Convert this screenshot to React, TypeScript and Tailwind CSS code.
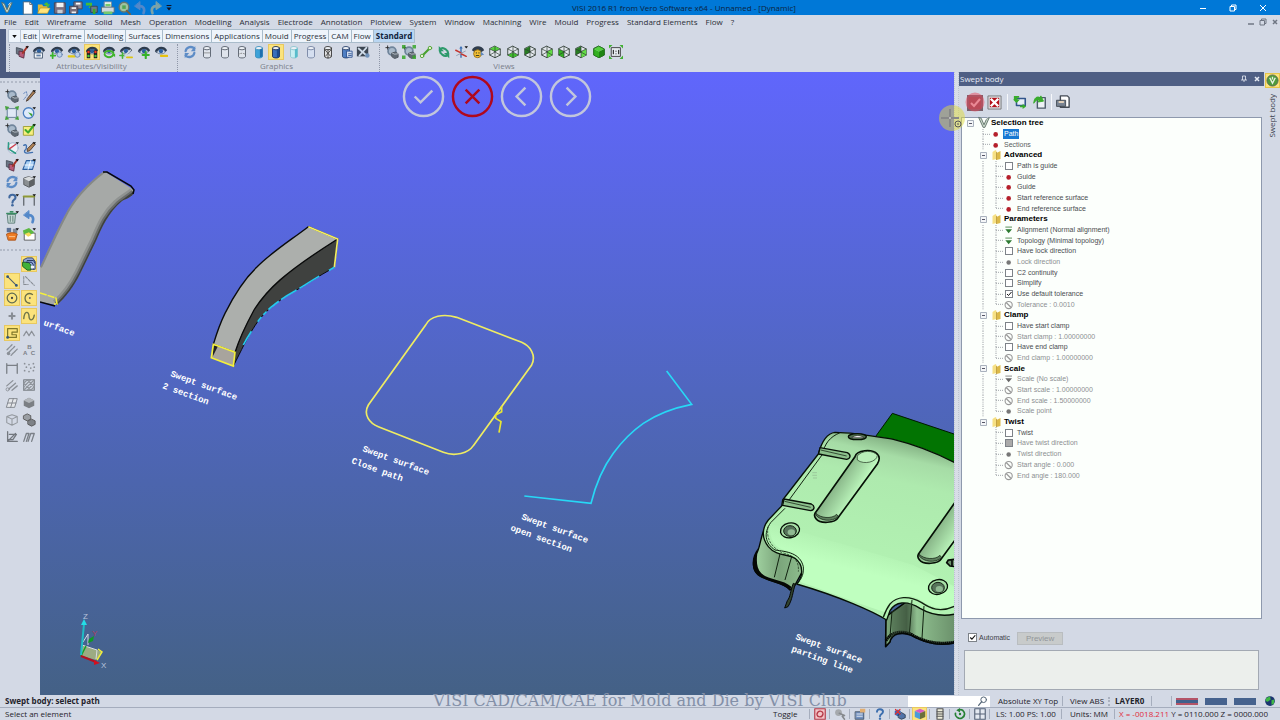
import { useState } from 'react';
import type { ReactNode } from 'react';
import clsx from 'clsx';

const MENU = [
  'File', 'Edit', 'Wireframe', 'Solid', 'Mesh', 'Operation', 'Modelling', 'Analysis', 'Electrode', 'Annotation',
  'Plotview', 'System', 'Window', 'Machining', 'Wire', 'Mould', 'Progress', 'Standard Elements', 'Flow', '?',
];

const TABS = [
  'Edit', 'Wireframe', 'Modelling', 'Surfaces', 'Dimensions', 'Applications', 'Mould', 'Progress', 'CAM', 'Flow', 'Standard',
];

/* ---------- icons ---------- */

function Svg({ children, className = 'size-[14px]' }: { children: ReactNode; className?: string }) {
  return (
    <svg viewBox="0 0 16 16" className={clsx('shrink-0', className)} fill="none" strokeLinecap="round" strokeLinejoin="round" aria-hidden="true">
      {children}
    </svg>
  );
}

function Eye({ children }: { children?: ReactNode }) {
  return (
    <Svg>
      <path d="M1 7C3 1 12 0 15 6L13 8C10 4 6 4 3 9Z" fill="#2d3b4d" />
      <path d="M3 8C6 4 11 4 13 8C10 11 6 11 3 8Z" fill="#dfe8f2" stroke="#5f7088" />
      <circle cx="8" cy="7" r="2.4" fill="#2c5f9e" />
      {children}
    </Svg>
  );
}

function Cylinder({ fill = '#dfe4ec', stroke = '#555d69', children }: { fill?: string; stroke?: string; children?: ReactNode }) {
  return (
    <Svg>
      <path d="M4 4V13C4 15.4 12 15.4 12 13V4" fill={fill} stroke={stroke} />
      <ellipse cx="8" cy="3.6" rx="4" ry="1.9" fill="#edf1f6" stroke={stroke} />
      {children}
    </Svg>
  );
}

function Cube({ top, left, right, bottom, back }: { top?: boolean; left?: boolean; right?: boolean; bottom?: boolean; back?: boolean }) {
  const solid = top && left && right;
  return (
    <Svg>
      <path d="M8 1.5L14 4.5V11.5L8 14.5L2 11.5V4.5Z" fill="#e4e9ee" stroke="#2f3c35" />
      {bottom && <path d="M8 8.5L14 11.5L8 14.5L2 11.5Z" fill="#3fbe2b" />}
      {back && <path d="M8 1.5L2 4.5V11.5L8 8.5Z" fill="#277d22" />}
      {top && <path d="M8 1.5L14 4.5L8 7.5L2 4.5Z" fill="#52d03b" />}
      {left && <path d="M2 4.5L8 7.5V14.5L2 11.5Z" fill="#33b021" />}
      {right && <path d="M14 4.5L8 7.5V14.5L14 11.5Z" fill={solid ? '#1f8514' : '#62dc45'} />}
      {solid ? (
        <path d="M8 1.5L14 4.5V11.5L8 14.5L2 11.5V4.5Z" stroke="#1f7a18" />
      ) : (
        <path d="M2 4.5L8 7.5L14 4.5M8 7.5V14.5M8 1.5V8L2 11.5M8 8L14 11.5" stroke="#2f3c35" strokeWidth=".8" />
      )}
    </Svg>
  );
}

const corner = <path d="M12 1.5H16L14 4Z" fill="#111" />;

function Magnifier({ green }: { green?: boolean }) {
  return (
    <Svg>
      <path d="M1 3H5M3 1V5" stroke="#222" />
      <circle cx="8" cy="7" r="4.500" fill="#a9bacb" stroke="#70859b" strokeWidth="2" />
      <path d="M8 9L12 8L15 10V14L11 15.500L8 13.500Z" fill="#5f6973" stroke="#4a525b" />
      <path d="M8 9L11 10.500L15 10" stroke="#b9c1c9" />
      {green && <path d="M0 0H4V4H0ZM12 0H16V4H12ZM0 12H4V16H0ZM12 12H16V16H12Z" fill="#37a62b" fillOpacity=".85" />}
    </Svg>
  );
}

const icons: Record<string, ReactNode> = {
  v: (
    <Svg>
      <path d="M2 2L7 13L9 13L14 2L11 3L8 10L5 3Z" fill="#c9d7c9" stroke="#5d6f67" />
      <path d="M10 4L12 2" stroke="#fff" />
    </Svg>
  ),
  newDoc: <Svg><path d="M3 1H10L13 4V15H3Z" fill="#fff" stroke="#5d6b7a" /><path d="M10 1V4H13" stroke="#5d6b7a" /></Svg>,
  open: <Svg><path d="M1 4H6L7 6H12V14H1Z" fill="#e0b83a" /><path d="M4 8H15L12 14H1Z" fill="#ffe37a" stroke="#b58d1e" strokeWidth=".700" /><path d="M8 4C10 1 12 1 13 4L15 3L13 7L10 5" fill="#4bb93a" /></Svg>,
  save: <Svg><path d="M2 2H14V14H2Z" fill="#7b6f80" stroke="#4a434f" /><path d="M4 2H12V7H4Z" fill="#f1f1f1" /><path d="M5 10H11V14H5Z" fill="#c7cdd4" /></Svg>,
  saveAll: <Svg><path d="M6 1H15V9H6Z" fill="#8d8792" stroke="#474150" /><path d="M8 2H13V4H8Z" fill="#fff" /><path d="M1 6H10V14H1Z" fill="#756d7c" stroke="#474150" /><path d="M3 7H8V9H3ZM3 12H8V14H3Z" fill="#eee" /></Svg>,
  swap: <Svg><path d="M1 2H8V8H4L6 5H1Z" fill="#45bb37" /><path d="M7 6H14V13H7Z" fill="#6e7a88" stroke="#39424d" /><path d="M9 9H12V15H9Z" fill="#39a62c" /></Svg>,
  print: <Svg><path d="M4 1H12V7H4Z" fill="#fff" stroke="#789" /><path d="M1 7H15V13H1Z" fill="#cfd8dd" stroke="#5c6b75" /><path d="M5 3H11V6H5ZM3 12H13V15H3Z" fill="#74c96d" /></Svg>,
  preview: <Svg><circle cx="8" cy="7" r="5.500" fill="#9fc2a1" stroke="#68786d" strokeWidth="1.600" /><path d="M6 5H10V9H6Z" fill="#4fa653" /><path d="M11 11L15 15" stroke="#79603c" strokeWidth="2" /></Svg>,
  undo: <Svg><path d="M12 14C14 9 12 5 6 6" stroke="#5388c9" strokeWidth="3" /><path d="M8 1V10L2 6Z" fill="#5388c9" stroke="#5388c9" /></Svg>,
  redo: <Svg><path d="M4 14C2 9 4 5 10 6" stroke="#7ca3a8" strokeWidth="3" /><path d="M8 1V10L14 6Z" fill="#7ca3a8" stroke="#7ca3a8" /></Svg>,
  drop: <Svg className="size-[8px]"><path d="M4 3H12" stroke="#112" strokeWidth="2" /><path d="M3 7H13L8 13Z" fill="#112" /></Svg>,

  paint: <Svg><path d="M2 3L9 5L8 12L2 10Z" fill="#6a7584" stroke="#3d4550" /><path d="M5 7L11 8L10 15L5 13Z" fill="#b85a78" stroke="#5c3045" /><path d="M14 2L9 9" stroke="#a5352a" strokeWidth="2.200" />{corner}</Svg>,
  eyeDoc: <Eye><path d="M3 9H12V15H3Z" fill="#f0f4f8" stroke="#445870" /><path d="M5 11H10V13H5Z" fill="#5f7fa8" /></Eye>,
  eyeGlass: <Eye><path d="M3 9V15M0 12H6" stroke="#3ab52d" strokeWidth="2" /><circle cx="11" cy="11" r="3" fill="#bcd0ea" stroke="#6a87b0" /></Eye>,
  eyeMinusGlass: <Eye><path d="M2 13H9" stroke="#e2c913" strokeWidth="2.400" /><circle cx="12" cy="11" r="3" fill="#bcd0ea" stroke="#6a87b0" /></Eye>,
  eyeLights: <Eye><path d="M2 6H6V15H2ZM10 6H14V15H10Z" fill="#222" /><circle cx="4" cy="8" r="1.400" fill="#e32" /><circle cx="12" cy="8" r="1.400" fill="#e32" /><circle cx="4" cy="12.500" r="1.400" fill="#4c3" /><circle cx="12" cy="12.500" r="1.400" fill="#4c3" /></Eye>,
  eyeCycle: <Eye><path d="M3 11C5 15 11 15 13 11M13 9C11 6 5 6 3 9" stroke="#3eb52b" strokeWidth="2.200" /><path d="M11 10H15V14Z" fill="#3eb52b" /></Eye>,
  eyePick: <Eye><path d="M4 9V15M1 12H7" stroke="#48b43a" strokeWidth="1.800" /><path d="M9 14H15" stroke="#dcc414" strokeWidth="2" /><path d="M13 6L7 12" stroke="#ced8e2" strokeWidth="2" /></Eye>,
  eyePlus: <Eye><path d="M10 8V15M6.500 11.500H13.500" stroke="#37b329" strokeWidth="2.400" /></Eye>,
  eyeMinus: <Eye><path d="M8 12.500H15" stroke="#e7c20f" strokeWidth="2.600" /></Eye>,

  refresh: <Svg><path d="M3 7C4 2 10 1 13 4M13 9C12 14 6 15 3 12" stroke="#5d8cc6" strokeWidth="2.600" /><path d="M14 1V7H9ZM2 15V9H7Z" fill="#5d8cc6" /></Svg>,
  cylWire: <Cylinder><path d="M5 9H11" stroke="#777" strokeWidth=".800" /></Cylinder>,
  cylPlain: <Cylinder />,
  cylHidden: <Cylinder><path d="M4 11C6 9 10 9 12 11" stroke="#777" strokeDasharray="1 2" /></Cylinder>,
  cylBlue: <Cylinder fill="#3da2d8" stroke="#3c8fbd"><path d="M9 5V14L12 13V4Z" fill="#1f6fae" /></Cylinder>,
  cylShaded: <Cylinder fill="#3a6fbb" stroke="#1d2c49"><path d="M9 5V15L12 13V4Z" fill="#1d4a90" /></Cylinder>,
  cylGhost: <Cylinder fill="#c8eef2" stroke="#8cc4cf"><path d="M9 5V15L12 13V4Z" fill="#58bccb" /></Cylinder>,
  cylLight: <Cylinder fill="#d5dff0" stroke="#7381a0" />,
  cylMesh: <Cylinder fill="#e1e1e1" stroke="#333"><path d="M5 6L11 13M11 6L5 13M8 5V15" stroke="#333" strokeWidth=".900" /></Cylinder>,
  cylBook: <Cylinder fill="#4e7fc4" stroke="#29416b"><path d="M9 7H15V14H9Z" fill="#d3def0" stroke="#2f5392" /><path d="M11 10H14M11 12H14" stroke="#2f5392" /></Cylinder>,
  tools: <Svg><path d="M1 2H14V13H1Z" fill="#3c4652" /><path d="M3 4L12 12M12 3L4 12" stroke="#cfdbe8" strokeWidth="2" /><circle cx="13" cy="12" r="2.500" fill="#6f92ba" /></Svg>,

  zoomBox: <Magnifier />,
  zoomAll: <Magnifier green />,
  measure: <Svg><path d="M4 12L12 4" stroke="#48a02f" strokeWidth="2.400" /><circle cx="3.500" cy="12.500" r="2" fill="#eaf2cf" stroke="#48a02f" /><circle cx="12.500" cy="3.500" r="2" fill="#eaf2cf" stroke="#48a02f" /></Svg>,
  rotate: <Svg><path d="M4 9C2 4 6 2 10 5L12 7M12 7C14 12 10 14 6 11L4 9" stroke="#2d9a6b" strokeWidth="2.400" /><path d="M2 1V7H8ZM14 15V9H8Z" fill="#2d9a6b" /></Svg>,
  axes: <Svg><path d="M8 14V3" stroke="#3b6fb5" strokeWidth="1.600" /><path d="M8 9L2 6M8 10L14 13" stroke="#c4342d" strokeWidth="1.600" /><path d="M3 12L13 7" stroke="#8b9bb0" /><path d="M6 4L8 1L10 4Z" fill="#3b6fb5" />{corner}</Svg>,
  eyeMan: <Svg><path d="M1 6C3 0 13 0 15 6L12 8H4Z" fill="#2f3c4c" /><circle cx="7.500" cy="10" r="4.500" fill="#f3bf34" stroke="#926c17" /><path d="M6 9H6.200M9 9H9.200M6 12H9" stroke="#442" strokeWidth="1.200" /><path d="M11 7L15 11L11 12Z" fill="#5c87c0" /></Svg>,
  cubeTop: <Cube top />,
  cubeBottom: <Cube bottom />,
  cubeBack: <Cube back />,
  cubeRight: <Cube right />,
  cubeLeft: <Cube left />,
  cubeRear: <Cube back right />,
  cubeIso: <Cube top left right />,
  oneToOne: <Svg><path d="M3 3H13V13H3Z" fill="#e8ecf1" stroke="#333" /><path d="M5 6V10M11 6V10M8 7V7.100M8 10V10.100" stroke="#333" strokeWidth="1.400" /><path d="M0 0H4L0 4ZM16 0V4L12 0ZM0 16V12L4 16ZM16 16H12L16 12Z" fill="#41b033" /></Svg>,

  // left dock
  sketchPen: <Svg><path d="M2 5L5 3L6 7L2 12" stroke="#5a7fb8" strokeDasharray="2 1.500" /><path d="M13 2L6 11L5 14L8 12L15 4Z" fill="#a97d52" stroke="#4b3c32" />{corner}</Svg>,
  fitBox: <Svg><path d="M3 3H13V13H3Z" fill="#dfe9f5" stroke="#5c7691" /><path d="M0 0L5 1L1 5ZM16 0L11 1L15 5ZM0 16L1 11L5 15ZM16 16L11 15L15 11Z" fill="#45a33a" /></Svg>,
  circlePen: <Svg><circle cx="7.500" cy="8" r="6" fill="#dfeafa" stroke="#4a7fc0" strokeWidth="1.500" /><path d="M7 7L11 12L12 9Z" fill="#37a12e" />{corner}</Svg>,
  tick: <Svg><path d="M2 4H13V14H2Z" fill="#f7ee7f" stroke="#9b9b2a" /><path d="M4 8L7 11L14 2" stroke="#3bab2e" strokeWidth="2.400" />{corner}</Svg>,
  axesBall: <Svg><circle cx="9" cy="8" r="6" fill="#eef2f8" stroke="#9fb0c9" /><path d="M4 2V9L12 14" stroke="#2d9b85" strokeWidth="1.800" /><path d="M5 9L12 4" stroke="#cc4050" strokeWidth="1.600" />{corner}</Svg>,
  curvePen: <Svg><path d="M2 5C6 2 6 9 3 11C2 15 8 14 12 13" stroke="#3f6fae" strokeWidth="1.600" /><path d="M13 2L6 9L6 12L9 11L15 4Z" fill="#b18353" stroke="#4b3c32" />{corner}</Svg>,
  surface: <Svg><path d="M5 3H15L12 13H1Z" fill="#a9d0f5" stroke="#2b5f9e" strokeWidth="1.300" /><path d="M10 3L7 13M3 8H13" stroke="#fff" />{corner}</Svg>,
  solid: <Svg><path d="M8 2L14 4V11L8 14L2 11V4Z" fill="#8b8f92" stroke="#53575a" /><path d="M2 4L8 7L14 4L8 2Z" fill="#d9dcde" /><path d="M8 7L14 4V11L8 14Z" fill="#5e6265" />{corner}</Svg>,
  help: <Svg><path d="M5 5C5 1 12 1 12 5C12 8 8.500 7 8.500 11" stroke="#41699f" strokeWidth="2.400" /><circle cx="8.500" cy="14" r="1.500" fill="#41699f" />{corner}</Svg>,
  dimension: <Svg><path d="M2 4V14M14 4V14" stroke="#5c6168" strokeWidth="1.400" /><path d="M2 4H14" stroke="#8f9a35" strokeWidth="2.400" />{corner}</Svg>,
  bin: <Svg><path d="M3 5H12L11 15H4Z" fill="#c6d8d5" stroke="#52766f" /><path d="M2 4H13M6 2H9" stroke="#3b8e63" strokeWidth="1.600" /><path d="M6 7V13M9 7V13" stroke="#52766f" />{corner}</Svg>,
  hand: <Svg><path d="M2 1H7V6H2Z" fill="#5b7196" /><path d="M9 2H14V7H9Z" fill="#7d8897" /><path d="M2 8C5 6 11 6 14 8L12 15H4Z" fill="#ee7c24" stroke="#a84b10" /><path d="M5 11H11" stroke="#ffd0a0" />{corner}</Svg>,
  picture: <Svg><path d="M3 7H15V15H3Z" fill="#fff" stroke="#555" /><path d="M1 4L8 1L14 6L9 9L2 8Z" fill="#5cb842" /><path d="M3 8L8 6L11 9L7 11Z" fill="#f3da58" />{corner}</Svg>,
  layers: (
    <Svg>
      <path d="M2 3L6 1H12L15 5V14H10L2 8Z" fill="#8fa6d8" stroke="#27376d" />
      <path d="M1 6H7L10 9V15H6L1 11Z" fill="#41b038" stroke="#1d5b1c" />
      <path d="M6 4L13 4L15 7M5 6H11L13 9V14" stroke="#1e2c55" />
      <path d="M10 10H14V13H10Z" fill="#eef1f5" />
    </Svg>
  ),
  line: <Svg><path d="M3 3L13 13" stroke="#52606d" strokeWidth="1.300" /><circle cx="3" cy="3" r="1.600" fill="#34577d" /><circle cx="13" cy="13" r="1.600" fill="#34577d" /></Svg>,
  angleLine: <Svg><path d="M2 3V12H7M4 3L14 13" stroke="#868c94" strokeWidth="1.200" strokeDasharray="3 1.500" /></Svg>,
  circle: <Svg><circle cx="8" cy="8" r="5.500" stroke="#5f6a50" strokeWidth="1.400" /><circle cx="8" cy="8" r="1.300" fill="#444" /></Svg>,
  arc: <Svg><path d="M12 4C7 1 2 5 4 11C5 13 8 14 9 14" stroke="#6d6f46" strokeWidth="1.500" /><circle cx="9" cy="8" r="1.100" fill="#666" /></Svg>,
  point: <Svg><path d="M8 5V11M5 8H11" stroke="#888d94" strokeWidth="2.400" /></Svg>,
  spline: <Svg><path d="M2 11C3 1 8 3 8 8C8 14 13 14 14 7" stroke="#71764a" strokeWidth="1.600" /></Svg>,
  profile: <Svg><path d="M3 13V3H14V7H8V10H13V13H4" stroke="#80782a" strokeWidth="1.400" /><circle cx="3" cy="13" r="1.600" fill="#34577d" /></Svg>,
  zigzag: <Svg><path d="M2 11L5 6L8 11L11 6L14 11" stroke="#8b9097" strokeWidth="1.400" /></Svg>,
  hatchA: <Svg><path d="M2 7L9 14M5 4L12 11M8 2L14 8" stroke="#8b9097" strokeWidth="1.500" strokeDasharray="2 1" transform="matrix(-1 0 0 1 16 0)" /><circle cx="4" cy="12" r="2" fill="#8b9097" /></Svg>,
  dimGrey: <Svg><path d="M2 3V14M14 3V14M2 5H14" stroke="#7b8087" strokeWidth="1.500" /></Svg>,
  dots: <Svg><path d="M3 3V3.100M8 4V4.100M13 3V3.100M5 7V7.100M10 8V8.100M3 11V11.100M8 12V12.100M13 11V11.100M14 7V7.100" stroke="#8b9097" strokeWidth="2" /></Svg>,
  hatchB: <Svg><path d="M2 9L8 14M4 6L11 12M7 3L14 9" stroke="#8b9097" strokeWidth="1.500" transform="matrix(-1 0 0 1 16 0)" /><circle cx="3" cy="13" r="1.800" stroke="#8b9097" /></Svg>,
  mesh: <Svg><path d="M2 2H14V14H2Z" stroke="#7b8087" strokeWidth="1.400" /><path d="M2 6L6 2M2 10L10 2M2 14L14 2M6 14L14 6M10 14L14 10M2 6L10 14M6 2L14 10" stroke="#90959b" strokeWidth="1.300" /></Svg>,
  sheet: <Svg><path d="M5 3H14L11 13H2Z" fill="#e5e7ea" stroke="#7b8087" /><path d="M9.500 3L6.500 13M3.500 8H12.500" stroke="#7b8087" /></Svg>,
  solidGrey: <Svg><path d="M8 2L14 5V11L8 14L2 11V5Z" fill="#7b7f84" /><path d="M2 5L8 2L14 5L8 8Z" fill="#b3b7bc" /></Svg>,
  wireCube: <Svg><path d="M8 2L14 4V11L8 14L2 11V4Z M2 4L8 7L14 4M8 7V14" stroke="#94999f" strokeWidth="1.200" /></Svg>,
  cubes: <Svg><path d="M2 3L6 1L10 3V7L6 9L2 7Z" fill="#9a9ea3" stroke="#555" /><path d="M7 9L11 7L15 9V13L11 15L7 13Z" fill="#7e8287" stroke="#555" /></Svg>,
  plane: <Svg><path d="M3 2V13H14M3 13L12 4M5 5H13L9 11H4" stroke="#72777e" strokeWidth="1.500" /></Svg>,
  ribs: <Svg><path d="M2 13L5 4L8 4L5 13M7 13L10 4L14 4L11 13" stroke="#7b8087" strokeWidth="1.500" /></Svg>,
  abc: (
    <Svg>
      <g fill="#7b8087" fontFamily="Liberation Sans, sans-serif" fontSize="7" fontWeight="700">
        <text x="6" y="7">B</text>
        <text x="1" y="14">A</text>
        <text x="10" y="14">C</text>
      </g>
    </Svg>
  ),

  // panel and status
  importDoc: <Svg><path d="M4 4H14V12H4Z" fill="#e7eef8" stroke="#31548b" strokeWidth="1.800" /><path d="M1 1H7V3H5V5H8L4 9L0 5H1Z" fill="#38ac2c" /><path d="M8 12H11V10L15 13L11 16V14H8Z" fill="#38ac2c" /></Svg>,
  exportDoc: <Svg><path d="M5 3H14V15H5Z" fill="#eef2f6" stroke="#4c5a6a" strokeWidth="1.600" /><path d="M1 9C1 3 5 1 8 3L9 1L12 7L6 8L7 6C5 5 3 6 1 9Z" fill="#38ac2c" stroke="#38ac2c" /></Svg>,
  docSave: <Svg><path d="M5 1H13L15 3V14H5Z" fill="#fff" stroke="#444b55" strokeWidth="1.600" /><path d="M1 6H11V13H1Z" fill="#788392" stroke="#3c434d" /><path d="M3 7H9V9H3Z" fill="#f0dcc0" /></Svg>,
  globe: <Svg className="size-[12px]"><circle cx="8" cy="8" r="6.500" fill="#1b3570" /><path d="M3 4L8 2L9 6L5 9L2 8ZM10 7L14 6L13 12L10 13Z" fill="#3fb846" /></Svg>,
  search: <Svg className="size-[10px]"><circle cx="9" cy="6" r="4.500" stroke="#567" strokeWidth="1.600" /><path d="M6 9L1 15" stroke="#567" strokeWidth="2" /></Svg>,
  sRed: <Svg className="size-[12px]"><path d="M1 1H15V15H1Z" fill="#f3c5c8" stroke="#b53b49" strokeWidth="1.500" /><path d="M4 8C5 3 11 3 12 7M12 8C11 13 5 13 4 9" stroke="#b53b49" strokeWidth="1.800" /></Svg>,
  sGrey: <Svg className="size-[12px]"><circle cx="6" cy="6" r="4.500" fill="#a5a9ad" /><path d="M7 7L14 10L11 11L14 15" stroke="#85898d" strokeWidth="2" /></Svg>,
  sForm: <Svg className="size-[12px]"><path d="M2 5H13V15H2Z" fill="#7391c0" stroke="#345" /><path d="M4 8H11M4 11H11" stroke="#fff" /><path d="M8 1H15V6H8Z" fill="#e1ad71" /></Svg>,
  sHelp: <Svg className="size-[12px]"><path d="M4 5C4 0 12 1 12 5C12 8 8 8 8 11" stroke="#3d6fae" strokeWidth="2.600" /><circle cx="8" cy="14.200" r="1.600" fill="#3d6fae" /></Svg>,
  sCubes: <Svg className="size-[12px]"><path d="M1 4L5 2L9 4V9L5 11L1 9Z" fill="#3b66ba" /><path d="M6 9L10 6L15 9V13L10 15L6 13Z" fill="#5073a8" stroke="#234" /><path d="M2 2L8 8M8 2L2 8" stroke="#d33" strokeWidth="1.600" /></Svg>,
  sBox: <Svg className="size-[12px]"><path d="M8 1L15 4L8 7L1 4Z" fill="#d65bc6" /><path d="M1 4L8 7V15L1 12Z" fill="#4a9bd8" /><path d="M15 4L8 7V15L15 12Z" fill="#6a6f3a" /></Svg>,
  sFilm: <Svg className="size-[12px]"><path d="M4 1H12V15H4Z" fill="#f0efdc" stroke="#555" strokeWidth="1.500" /><path d="M4 5H12M4 8H12M4 11H12" stroke="#555" strokeWidth="1.400" /></Svg>,
  sCycle: <Svg className="size-[12px]"><path d="M6 3C13 0 17 9 11 13C6 16 1 11 2 7" stroke="#278135" strokeWidth="2.200" /><path d="M8 0V6L3 3Z" fill="#278135" /><circle cx="8" cy="8" r="1.600" fill="#278135" /></Svg>,
  sGrid: <Svg className="size-[12px]"><path d="M1 1H15V15H1ZM8 1V15M1 8H15" fill="#e4e9f1" stroke="#566378" strokeWidth="1.500" /></Svg>,
};

function IconButton({ name, active, className }: { name: string; active?: boolean; className?: string }) {
  return (
    <button
      type="button"
      aria-label={name}
      className={clsx('grid shrink-0 place-items-center', active && 'bg-[#fbe37c] outline outline-[#e8c860]', className ?? 'size-[14px]')}
    >
      {icons[name]}
    </button>
  );
}

/* ---------- top bars ---------- */

function TitleBar() {
  return (
    <header className="flex h-[15px] shrink-0 items-center bg-[#0078d7]">
      <div className="flex w-[180px] items-center gap-[3px]">
        <IconButton name="v" />
        <span className="w-px" />
        {['newDoc', 'open', 'save', 'saveAll', 'swap', 'print', 'preview', 'undo', 'redo'].map((n) => (
          <IconButton key={n} name={n} className="size-[13px]" />
        ))}
        <IconButton name="drop" className="size-[8px]" />
      </div>
      <h1 className="flex-1 text-center text-[8px] text-[#0c2440]">VISI 2016 R1 from Vero Software x64 - Unnamed - [Dynamic]</h1>
      <div className="flex w-[92px] text-white">
        <button type="button" aria-label="Minimise" className="grid w-[30px] place-items-center">
          <svg viewBox="0 0 8 8" className="size-2"><path d="M1 4.500H7" stroke="currentColor" /></svg>
        </button>
        <button type="button" aria-label="Restore" className="grid w-[30px] place-items-center">
          <svg viewBox="0 0 8 8" className="size-2" fill="none"><path d="M1 2.500H5.500V7H1ZM2.500 2.500V1H7V5.500H5.500" stroke="currentColor" /></svg>
        </button>
        <button type="button" aria-label="Close" className="grid w-[30px] place-items-center">
          <svg viewBox="0 0 8 8" className="size-2"><path d="M1 1L7 7M7 1L1 7" stroke="currentColor" /></svg>
        </button>
      </div>
    </header>
  );
}

function MenuBar() {
  return (
    <nav className="flex h-[14px] shrink-0 items-center">
      <div className="flex flex-1 gap-2 pl-1">
        {MENU.map((m) => (
          <button key={m} type="button" className="whitespace-nowrap text-[#2b2f38]">{m}</button>
        ))}
      </div>
      <div className="flex gap-1 pr-px text-[#6f7683]">
        <button type="button" aria-label="Minimise view"><svg viewBox="0 0 8 8" className="size-2"><path d="M1 6H7" stroke="currentColor" strokeWidth="1.500" /></svg></button>
        <button type="button" aria-label="Restore view"><svg viewBox="0 0 8 8" className="size-2" fill="none"><path d="M1 2.500H5.500V7H1ZM2.500 2.500V1H7V5.500H5.500" stroke="currentColor" /></svg></button>
        <button type="button" aria-label="Close view"><svg viewBox="0 0 8 8" className="size-2"><path d="M2 2L6 6M6 2L2 6" stroke="currentColor" strokeWidth="1.500" /></svg></button>
      </div>
    </nav>
  );
}

function RibbonGroup({ title, names, active, width }: { title: string; names: string[]; active?: string; width: string }) {
  return (
    <section className={clsx('flex h-full flex-col items-center border-l border-dotted border-[#8f97a8]', width)}>
      <div className="flex w-full justify-between pt-px pr-[9px] pl-[5px]">
        {names.map((n) => <IconButton key={n} name={n} active={n === active} />)}
      </div>
      <h2 className="mt-px mr-1 text-[8px] leading-[12px] text-[#7a808c]">{title}</h2>
    </section>
  );
}

function Ribbon() {
  const [tab, setTab] = useState('Standard');
  return (
    <div className="flex h-[43px] shrink-0">
      <div className="w-[6px] bg-[#4c5b80]" />
      <div className="flex-1 pl-[2px]">
        <div className="flex h-[14px]">
          <div className="flex bg-[#eef4fb]">
            <button type="button" aria-label="Tab list" className="grid w-[13px] place-items-center border border-[#bcc7d6]">
              <svg viewBox="0 0 6 4" className="h-[3px] w-[5px]"><path d="M0 0H6L3 4Z" fill="#111" /></svg>
            </button>
            {TABS.map((t) => (
              <button
                key={t}
                type="button"
                onClick={() => setTab(t)}
                className={clsx('border-y border-r border-[#a9bccb] px-[2px] leading-3', t === tab ? 'bg-[#b9d6f2] font-bold text-[#10233c]' : 'text-[#2b3340]')}
              >
                {t}
              </button>
            ))}
          </div>
        </div>
        <div className="flex h-[29px] pt-px pl-px">
          <RibbonGroup
            title="Attributes/Visibility"
            width="w-[168px]"
            active="eyeLights"
            names={['paint', 'eyeDoc', 'eyeGlass', 'eyeMinusGlass', 'eyeLights', 'eyeCycle', 'eyePick', 'eyePlus', 'eyeMinus']}
          />
          <RibbonGroup
            title="Graphics"
            width="w-[202px]"
            active="cylShaded"
            names={['refresh', 'cylWire', 'cylPlain', 'cylHidden', 'cylBlue', 'cylShaded', 'cylGhost', 'cylLight', 'cylMesh', 'cylBook', 'tools']}
          />
          <RibbonGroup
            title="Views"
            width="w-[253px]"
            names={['zoomBox', 'zoomAll', 'measure', 'rotate', 'axes', 'eyeMan', 'cubeTop', 'cubeBottom', 'cubeBack', 'cubeRight', 'cubeLeft', 'cubeRear', 'cubeIso', 'oneToOne']}
          />
        </div>
      </div>
    </div>
  );
}

/* ---------- left dock ---------- */

const DOCK_TOP = [
  'zoomBox', 'sketchPen', 'fitBox', 'circlePen', 'zoomBox', 'tick', 'axesBall', 'curvePen', 'paint', 'surface',
  'refresh', 'solid', 'help', 'dimension', 'bin', 'undo', 'hand', 'picture',
];
const DOCK_BOTTOM = [
  '', 'layers', 'line', 'angleLine', 'circle', 'arc', 'point', 'spline', 'profile', 'zigzag', 'hatchA', 'abc',
  'dimGrey', 'dots', 'hatchB', 'mesh', 'sheet', 'solidGrey', 'wireCube', 'cubes', 'plane', 'ribs',
];
const DOCK_ACTIVE = ['layers', 'line', 'circle', 'arc', 'spline', 'profile'];

function LeftDock() {
  return (
    <aside className="w-10 shrink-0">
      <div className="h-[6px] bg-[#4c5b80]" />
      <div className="mt-[3px] border-t-2 border-dotted border-[#b3bac8]" />
      <div className="mt-1 grid h-[156px] grid-cols-[17px_17px] place-items-center pl-[3px]">
        {DOCK_TOP.map((n, i) => <IconButton key={i} name={n} />)}
      </div>
      <div className="mt-[6px] border-t-2 border-dotted border-[#b3bac8]" />
      <div className="mt-1 grid h-[191px] grid-cols-[17px_17px] place-items-center pl-[3px]">
        {DOCK_BOTTOM.map((n, i) => (n ? <IconButton key={i} name={n} active={DOCK_ACTIVE.includes(n)} /> : <span key={i} />))}
      </div>
    </aside>
  );
}

/* ---------- 3D view ---------- */

const LABELS: [number, number, string][] = [
  [43, 325, 'urface'],
  [170, 376, 'Swept surface'],
  [162, 388, '2 section'],
  [362, 451, 'Swept surface'],
  [351, 463, 'Close path'],
  [521, 519, 'Swept surface'],
  [510, 530, 'open section'],
  [795, 639, 'Swept surface'],
  [791, 651, 'parting line'],
];

function SlotShape({ x, y }: { x: number; y: number }) {
  return (
    <g transform={`translate(${x} ${y})`}>
      <path d="M225 340L345 170C350 150 395 145 412 162C422 172 418 182 412 192L295 352C285 370 240 372 228 356C223 350 222 346 225 340Z" fill="url(#slot)" stroke="#061006" strokeWidth="5" />
      <path d="M228 345C240 362 275 368 295 350L290 343C275 358 240 354 228 340Z" fill="#5d7f5d" stroke="#0b160b" strokeWidth="2" />
      <path d="M352 168C365 150 400 150 412 166C412 185 372 196 352 180Z" fill="#b9efb9" stroke="#1c2f1c" strokeWidth="2" />
    </g>
  );
}

function ParkedPart() {
  return (
    <g transform="translate(740 400) scale(.33333)" strokeLinejoin="round">
      <path d="M457 40L645 103V195L405 112Z" fill="#027402" stroke="#001800" strokeWidth="3" />
      {/* skirts */}
      <path d="M72 390C62 412 60 440 52 456C36 480 36 510 54 524C85 546 130 545 150 570L165 555L195 500L160 460Z" fill="url(#skirtLeft)" stroke="#030703" strokeWidth="4" />
      <path d="M54 445C34 470 32 505 52 524C75 545 125 548 150 570L154 560C130 538 85 540 64 520C46 500 50 475 54 445Z" fill="#050805" />
      <path d="M160 550C150 575 152 590 142 602L134 624L144 620C158 598 158 575 166 553Z" fill="#32432f" stroke="#050805" strokeWidth="3" />
      <path d="M438 650L437 740L450 726C455 700 485 695 512 705C545 722 590 742 645 728V630L520 590Z" fill="url(#skirt)" stroke="#030703" strokeWidth="5" />
      <path d="M438 722C455 692 490 692 516 704C548 724 595 736 645 726" stroke="#050805" strokeWidth="9" strokeDasharray="5 1" />
      {/* cover */}
      <path d="M285 97C340 97 400 108 460 118C530 135 590 160 645 188V642C610 650 575 645 540 625C500 600 465 605 450 632L440 660C400 635 300 590 170 552C190 530 192 495 165 475C140 460 110 470 85 440C65 415 65 385 85 360L125 318L128 300L235 162C245 125 260 100 285 97Z" fill="url(#cover)" stroke="#061006" strokeWidth="4" />
      <path d="M88 372C170 385 220 410 300 430L520 495L645 560V615C610 630 575 625 545 602C510 580 470 582 436 636C380 620 280 580 182 546C200 500 180 465 140 452C105 445 88 420 88 372Z" fill="url(#fold)" />
      {/* rims */}
      <path d="M300 98C268 112 255 130 246 165L145 303M135 325L92 368C70 400 75 430 105 450C140 455 180 458 190 500C192 530 180 540 170 552" stroke="#10210f" strokeWidth="3" />
      <path d="M84 380C78 420 95 440 125 458C160 465 178 480 175 515" stroke="#10210f" strokeWidth="2" strokeDasharray="8 3" />
      <path d="M645 618C600 640 570 625 545 608C505 585 470 590 450 612C440 625 434 640 430 652" stroke="#10210f" strokeWidth="4" />
      <path d="M120 462L103 532M155 470L135 540M516 600L508 702M552 618L546 716M456 634L450 712" stroke="#10210f" strokeWidth="3" />
      <path d="M516 606L456 634V712C470 692 500 695 508 702Z" fill="#3b543b" opacity=".4" />
      {/* small ribs */}
      {[[0, 0], [-108, 154]].map(([dx, dy]) => (
        <g key={dx} transform={`translate(${dx} ${dy})`}>
          <path d="M240 143L322 158C334 164 332 176 320 178L236 162Z" fill="#8cc08c" stroke="#081008" strokeWidth="4" />
          <path d="M242 150L320 168" stroke="#081008" strokeWidth="2" />
        </g>
      ))}
      <SlotShape x={0} y={0} />
      <SlotShape x={310} y={123} />
      {/* holes */}
      <ellipse cx="352" cy="110" rx="27" ry="9" fill="#4f6f4f" stroke="#061006" strokeWidth="4" />
      <path d="M335 113C345 105 362 105 372 113Z" fill="#fff" stroke="#333" strokeWidth="2" />
      {[[150, 391], [594, 561]].map(([cx, cy]) => (
        <g key={cx}>
          <ellipse cx={cx} cy={cy} rx="29" ry="22" transform={`rotate(-12 ${cx} ${cy})`} fill="#a8e0a8" stroke="#061006" strokeWidth="4" />
          <ellipse cx={cx} cy={cy + 2} rx="19" ry="16" fill="#56735a" stroke="#152415" strokeWidth="3" />
          <ellipse cx={cx + 4} cy={cy + 6} rx="11" ry="9" fill="#8fb992" />
        </g>
      ))}
      <path d="M645 478L625 480L620 488L630 498L645 500M636 478V498" fill="#6b8f6b" stroke="#050805" strokeWidth="5" />
      <path d="M217 218H231M217 226H231M219 234H231" stroke="#93b893" strokeWidth="2" />
    </g>
  );
}

function Viewport() {
  return (
    <main className="relative min-w-0 flex-1 bg-linear-to-b from-[#6066fc] to-[#446186]">
      <svg viewBox="40 72 914 623" className="absolute inset-0 size-full" preserveAspectRatio="xMidYMid slice" fill="none">
        <defs>
          <linearGradient id="slot" x1="250" y1="230" x2="345" y2="290" gradientUnits="userSpaceOnUse">
            <stop offset="0" stopColor="#4f704f" />
            <stop offset=".35" stopColor="#86b386" />
            <stop offset="1" stopColor="#bdf8bd" />
          </linearGradient>
          <linearGradient id="skirt" x1="0" x2="1">
            <stop offset="0" stopColor="#7eaa7e" />
            <stop offset=".3" stopColor="#4c674c" />
            <stop offset=".45" stopColor="#8fbf8f" />
            <stop offset="1" stopColor="#6b916b" />
          </linearGradient>
          <linearGradient id="skirtLeft" x1="0" x2="1">
            <stop offset="0" stopColor="#a4d6a4" />
            <stop offset=".5" stopColor="#7ba57b" />
            <stop offset="1" stopColor="#8fbf8f" />
          </linearGradient>
          <linearGradient id="cover" x1="420" y1="110" x2="330" y2="500" gradientUnits="userSpaceOnUse">
            <stop offset="0" stopColor="#84b284" />
            <stop offset=".12" stopColor="#a6dca6" />
            <stop offset=".3" stopColor="#aeeaae" />
            <stop offset="1" stopColor="#b2f2b2" />
          </linearGradient>
          <linearGradient id="fold" x1="400" y1="440" x2="380" y2="520" gradientUnits="userSpaceOnUse">
            <stop offset="0" stopColor="#bfffbf" stopOpacity="0" />
            <stop offset="1" stopColor="#bfffbf" />
          </linearGradient>
          <clipPath id="sweepA"><path d="M104 171L134 190C135 196 128 198 122 201C108 213 102 227 96 241L80 274C74 286 66 297 57 305L40 302V267C48 250 58 228 64 217C74 197 88 183 104 171Z" /></clipPath>
        </defs>

        {/* rounded sweep */}
        <g clipPath="url(#sweepA)">
          <path d="M30 160H140V310H30Z" fill="#a6a9a7" />
          <path d="M134 193C128 198 122 201 118 205C106 216 102 227 96 241L80 274C74 286 66 297 57 305" stroke="#4d504e" strokeWidth="12" opacity=".25" />
          <path d="M134 193C128 198 122 201 118 205C106 216 102 227 96 241L80 274C74 286 66 297 57 305" stroke="#333634" strokeWidth="7" opacity=".4" />
          <path d="M134 193C128 198 122 201 118 205C106 216 102 227 96 241L80 274C74 286 66 297 57 305" stroke="#222423" strokeWidth="3" opacity=".6" />
          <path d="M104 171C88 183 74 197 64 217C58 228 48 250 40 267" stroke="#555856" strokeWidth="4" opacity=".4" />
        </g>
        <path d="M103 172L107 172L131 186L134 190L133 194" stroke="#07080b" strokeWidth="1.500" />
        <path d="M40 302L55 306" stroke="#07080b" strokeWidth="1.500" />
        <path d="M40 293L56 298L57 304L54 304" stroke="#f4f03c" strokeWidth="1.500" strokeDasharray="7 1" />

        {/* two-section sweep */}
        <g transform="translate(150 210) scale(.33333)">
          <path d="M563 87L553 172C500 202 465 225 435 243C400 262 385 275 365 290C340 313 325 330 310 355C290 385 275 420 250 468L255 427C275 370 285 345 300 320C340 240 400 190 563 87Z" fill="#3f413f" stroke="#0a0b0b" strokeWidth="3" />
          <path d="M475 50L563 87C400 190 350 240 312 300C285 350 270 380 255 427L190 403C200 370 210 340 225 310C250 260 280 210 320 172C360 130 420 92 475 50Z" fill="#acafac" stroke="#0a0b0b" strokeWidth="4" />
          <path d="M190 403L255 427L250 468L184 443Z" fill="#a8a49d" />
          <path d="M190 406L204 408L188 440Z" fill="#222" />
          <path d="M190 403L255 427L250 468L184 443Z" stroke="#f4f03c" strokeWidth="5" />
          <path d="M475 50L563 87L553 172" stroke="#f4ee62" strokeWidth="5" />
          <path d="M553 172C500 202 465 225 435 243C400 262 385 275 365 290C340 313 325 330 310 355C300 370 290 385 280 405" stroke="#25c9ee" strokeWidth="5" strokeDasharray="18 34 70 10 55 8 40 8 14 9" />
        </g>

        {/* closed path, then the open section */}
        <g transform="translate(350 300) scale(.33333)" strokeWidth="5">
          <path d="M320 52L515 127C540 138 560 165 545 195L370 437C355 460 315 470 280 457L85 380C60 370 38 345 55 315L227 75C240 48 280 40 320 52Z" stroke="#efec62" />
          <path d="M455 318V335L437 345V355L453 365L447 398" stroke="#e9e632" />
          <path d="M950 213L1025 313C960 326 920 343 880 370C840 398 815 425 790 460C757 505 738 550 723 610L523 588" stroke="#27d8f6" />
        </g>

        <ParkedPart />

        {/* work plane triad */}
        <path d="M82 645L97 650L102 652L96 660L82 656Z" fill="#b9c47f" opacity=".75" />
        <path d="M82 645L97 650L96 659M83 642L88 634V645" stroke="#d8dce2" />
        <path d="M98 649L102 652L97 660" stroke="#f1ee3d" strokeWidth="1.500" />
        <path d="M81 656L86 646" stroke="#16a02a" strokeWidth="1.500" />
        <path d="M88 643L89 639L94 636L93 641Z" fill="#0f9a24" />
        <path d="M81 655L84 624" stroke="#1fbcc6" strokeWidth="2" />
        <path d="M81 625L84 619L87 625Z" fill="#25dce6" />
        <path d="M81 656L96 662" stroke="#b51220" strokeWidth="2" />
        <path d="M94 660L100 663L94 665Z" fill="#d3101f" />
        <g fontFamily="Liberation Sans, sans-serif" fontSize="8" fill="#b9c4dc">
          <text x="83" y="619">Z</text>
          <text x="101" y="668">X</text>
          <text x="92" y="636" fill="#b23b5e">Y</text>
        </g>

        <g fill="#fff" fontFamily="Liberation Mono, monospace" fontSize="9" fontWeight="700">
          {LABELS.map(([x, y, text]) => (
            <text key={`${x}-${y}`} transform={`translate(${x} ${y}) rotate(20)`}>{text}</text>
          ))}
        </g>
      </svg>

      <div className="absolute inset-x-0 top-[3px] flex justify-center gap-[6px] text-[#c2c6dc]">
        <RoundButton label="Accept" path="M13 22L19 28L31 16" />
        <RoundButton label="Cancel" path="M15 15L29 29M29 15L15 29" className="text-[#b0081c]" />
        <RoundButton label="Previous" path="M26 13L17 22L26 31" />
        <RoundButton label="Next" path="M18 13L27 22L18 31" />
      </div>

      {/* cursor halo */}
      <svg viewBox="0 0 28 28" className="absolute top-[32px] -right-[12px] z-10 size-7" fill="none" aria-hidden="true">
        <circle cx="14" cy="14" r="13" fill="#e0dc3c" fillOpacity=".5" />
        <path d="M12 5V23M3 14H21" stroke="#222" strokeWidth="2" />
        <path d="M12 5V23M3 14H21" stroke="#eee" />
        <circle cx="20" cy="20" r="3" stroke="#555" />
        <path d="M19 20H21" stroke="#555" />
      </svg>
    </main>
  );
}

function RoundButton({ label, path, className }: { label: string; path: string; className?: string }) {
  return (
    <button type="button" aria-label={label} className={className}>
      <svg viewBox="0 0 44 44" className="size-[43px]" fill="none" stroke="currentColor" strokeWidth="2.500">
        <circle cx="22" cy="22" r="20" />
        <path d={path} />
      </svg>
    </button>
  );
}

/* ---------- selection tree ---------- */

type Kind = 'red' | 'grey' | 'list' | 'listOff' | 'check' | 'checkOff' | 'value';
interface Leaf { text: string; kind: Kind; on?: boolean; dim?: boolean }

const TREE: { title: string; items: Leaf[] }[] = [
  {
    title: 'Advanced',
    items: [
      { text: 'Path is guide', kind: 'check' },
      { text: 'Guide', kind: 'red' },
      { text: 'Guide', kind: 'red' },
      { text: 'Start reference surface', kind: 'red' },
      { text: 'End reference surface', kind: 'red' },
    ],
  },
  {
    title: 'Parameters',
    items: [
      { text: 'Alignment (Normal alignment)', kind: 'list' },
      { text: 'Topology (Minimal topology)', kind: 'list' },
      { text: 'Have lock direction', kind: 'check' },
      { text: 'Lock direction', kind: 'grey', dim: true },
      { text: 'C2 continuity', kind: 'check' },
      { text: 'Simplify', kind: 'check' },
      { text: 'Use default tolerance', kind: 'check', on: true },
      { text: 'Tolerance : 0.0010', kind: 'value', dim: true },
    ],
  },
  {
    title: 'Clamp',
    items: [
      { text: 'Have start clamp', kind: 'check' },
      { text: 'Start clamp : 1.00000000', kind: 'value', dim: true },
      { text: 'Have end clamp', kind: 'check' },
      { text: 'End clamp : 1.00000000', kind: 'value', dim: true },
    ],
  },
  {
    title: 'Scale',
    items: [
      { text: 'Scale (No scale)', kind: 'listOff', dim: true },
      { text: 'Start scale : 1.00000000', kind: 'value', dim: true },
      { text: 'End scale : 1.50000000', kind: 'value', dim: true },
      { text: 'Scale point', kind: 'grey', dim: true },
    ],
  },
  {
    title: 'Twist',
    items: [
      { text: 'Twist', kind: 'check' },
      { text: 'Have twist direction', kind: 'checkOff', dim: true },
      { text: 'Twist direction', kind: 'grey', dim: true },
      { text: 'Start angle : 0.000', kind: 'value', dim: true },
      { text: 'End angle : 180.000', kind: 'value', dim: true },
    ],
  },
];

function Branch({ top = true, bottom = true, right = true }: { top?: boolean; bottom?: boolean; right?: boolean }) {
  return (
    <svg className="h-full w-[13px] shrink-0" stroke="#a2a6ab" strokeDasharray="1 1" aria-hidden="true">
      {top && <line x1="6" x2="6" y1="0" y2="50%" />}
      {bottom && <line x1="6" x2="6" y1="50%" y2="100%" />}
      {right && <line x1="6" x2="13" y1="50%" y2="50%" />}
    </svg>
  );
}

function Expander() {
  return (
    <button type="button" aria-label="Collapse" className="grid w-[13px] shrink-0 place-items-center">
      <svg viewBox="0 0 7 7" className="size-[7px]" fill="none"><path d="M.5 .5H6.500V6.500H.5Z" fill="#f4f6f8" stroke="#a9b1bd" /><path d="M2 3.500H5" stroke="#556" /></svg>
    </button>
  );
}

function Folder() {
  return (
    <svg viewBox="0 0 10 10" className="h-[10px] w-[13px] shrink-0" aria-hidden="true">
      <path d="M1 2L4 0L5 1V9L1 10Z" fill="#f6e084" />
      <path d="M5 3L9 1V9L5 10Z" fill="#dcb948" />
      <path d="M5 2V10" stroke="#b08c2a" strokeWidth=".7" />
    </svg>
  );
}

function Marker({ kind }: { kind: Kind }) {
  return (
    <svg viewBox="0 0 12 12" className="h-[10px] w-[13px] shrink-0" fill="none" aria-hidden="true">
      {kind === 'red' && <circle cx="5" cy="6.500" r="2.800" fill="#b5202b" />}
      {kind === 'grey' && <circle cx="5" cy="6.500" r="2.700" fill="#777" />}
      {(kind === 'list' || kind === 'listOff') && (
        <>
          <path d="M1 2.500H9" stroke={kind === 'list' ? '#3c7c3c' : '#777'} />
          <path d="M1 5H9L5 10Z" fill={kind === 'list' ? '#2d7a32' : '#666'} />
        </>
      )}
      {kind === 'value' && (
        <>
          <circle cx="5" cy="6" r="4.300" stroke="#999" strokeWidth="1.300" />
          <path d="M2 3L8 9" stroke="#999" strokeWidth="1.300" />
        </>
      )}
    </svg>
  );
}

function CheckBox({ id, defaultChecked, disabled, className = 'size-2' }: { id: string; defaultChecked?: boolean; disabled?: boolean; className?: string }) {
  return (
    <span className="grid w-[12px] shrink-0 place-items-center">
      <input
        id={id}
        type="checkbox"
        defaultChecked={defaultChecked}
        disabled={disabled}
        className={clsx('peer col-start-1 row-start-1 appearance-none border border-[#7d8288] bg-white disabled:bg-[#aaa]', className)}
      />
      <svg viewBox="0 0 8 8" className={clsx('pointer-events-none col-start-1 row-start-1 hidden peer-checked:block', className)} fill="none">
        <path d="M2 4L3.500 5.500L6.500 2" stroke="#111" strokeWidth="1" />
      </svg>
    </span>
  );
}

function LeafRow({ leaf, id, last, lastGroup }: { leaf: Leaf; id: string; last: boolean; lastGroup: boolean }) {
  const isCheck = leaf.kind === 'check' || leaf.kind === 'checkOff';
  const color = leaf.dim ? 'text-[#8c8f92]' : 'text-[#4a4d51]';
  return (
    <li className="flex min-h-0 flex-1 items-center">
      <span className="w-[13px] shrink-0" />
      {lastGroup ? <span className="w-[13px] shrink-0" /> : <Branch right={false} />}
      <Branch bottom={!last} />
      {isCheck ? <CheckBox id={id} defaultChecked={leaf.on} disabled={leaf.kind === 'checkOff'} /> : <Marker kind={leaf.kind} />}
      {isCheck ? (
        <label htmlFor={id} className={clsx('pl-[2px] whitespace-nowrap', color)}>{leaf.text}</label>
      ) : (
        <button type="button" className={clsx('pl-px whitespace-nowrap', color)}>{leaf.text}</button>
      )}
    </li>
  );
}

function SelectionTree() {
  const [picked, setPicked] = useState('Path');
  return (
    <ul className="flex h-[363px] flex-col font-['Liberation_Sans',sans-serif] text-[7px] leading-[10px]">
      <li className="flex min-h-0 flex-1 items-center">
        <Expander />
        <span className="grid w-[13px] place-items-center">{icons.v}</span>
        <span className="pl-px text-[8px] font-bold text-black">Selection tree</span>
      </li>
      {['Path', 'Sections'].map((t) => (
        <li key={t} className="flex min-h-0 flex-1 items-center">
          <span className="w-[13px] shrink-0" />
          <Branch />
          <Marker kind="red" />
          <button
            type="button"
            onClick={() => setPicked(t)}
            className={clsx('px-px whitespace-nowrap', picked === t ? 'bg-[#1878d2] text-white' : 'text-[#5a5d61]')}
          >
            {t}
          </button>
        </li>
      ))}
      {TREE.flatMap((group, gi) => [
        <li key={group.title} className="flex min-h-0 flex-1 items-center">
          <span className="w-[13px] shrink-0" />
          <Expander />
          <Folder />
          <span className="pl-px text-[8px] font-bold text-black">{group.title}</span>
        </li>,
        ...group.items.map((leaf, i) => (
          <LeafRow
            key={`${group.title}-${i}`}
            id={`${group.title}-${i}`}
            leaf={leaf}
            last={i === group.items.length - 1}
            lastGroup={gi === TREE.length - 1}
          />
        )),
      ])}
    </ul>
  );
}

function SweptPanel() {
  return (
    <aside className="flex w-[305px] shrink-0 flex-col">
      <div className="flex h-[14px] shrink-0 items-center bg-[#4f5f84] pr-[3px] pl-px text-[#e8ecf5]">
        <h2 className="flex-1 text-[8px]">Swept body</h2>
        <button type="button" aria-label="Pin" className="mr-[5px]"><svg viewBox="0 0 8 8" className="size-2" fill="none"><path d="M2.500 1H5.500V5M2.500 1V5M1 5H7M4 5V7" stroke="currentColor" strokeWidth=".8" /></svg></button>
        <button type="button" aria-label="Close panel"><svg viewBox="0 0 8 8" className="size-2"><path d="M2 2L6 6M6 2L2 6" stroke="currentColor" strokeWidth="1.500" /></svg></button>
      </div>

      <div className="flex h-[31px] shrink-0 items-center pl-[6px]">
        <button type="button" aria-label="Accept">
          <svg viewBox="0 0 20 20" className="size-5" fill="none">
            <path d="M3 4H17V18H3Z" fill="#8c4c54" stroke="#76616b" strokeWidth="2" />
            <path d="M6 11L9 14L15 7" stroke="#eecdd0" strokeWidth="2" />
            <circle cx="10" cy="10" r="9.500" fill="#e8485c" fillOpacity=".5" />
          </svg>
        </button>
        <button type="button" aria-label="Cancel" className="ml-[2px] pt-px">
          <svg viewBox="0 0 16 16" className="size-[15px]" fill="none">
            <path d="M1 1H15V15H1Z" fill="#d9dce0" stroke="#777" />
            <path d="M3 3H13V13H3Z" fill="#b30f18" />
            <path d="M4 4L12 12M12 4L4 12" stroke="#fff" strokeWidth="2.600" />
          </svg>
        </button>
        <span className="mx-[5px] h-4 w-px bg-[#f6f8fb]" />
        <IconButton name="importDoc" />
        <span className="w-[6px]" />
        <IconButton name="exportDoc" />
        <span className="mx-1 h-4 w-px bg-[#f6f8fb]" />
        <IconButton name="docSave" />
      </div>

      <div className="mx-[2px] min-h-0 flex-1 border border-[#8e99ad] bg-[#fcfffc] pl-[2px]">
        <SelectionTree />
      </div>

      <div className="flex h-[27px] shrink-0 items-end gap-1 pb-px pl-[7px] font-['Liberation_Sans',sans-serif]">
        <span className="flex h-[15px] items-center gap-px">
          <CheckBox id="automatic" defaultChecked className="size-[9px]" />
          <label htmlFor="automatic" className="text-[7px] text-[#3c4047]">Automatic</label>
        </span>
        <button type="button" disabled className="ml-[3px] h-[13px] w-[46px] border border-[#b9bdc0] bg-[#c8cbcb] text-[8px] leading-[10px] text-[#92969a]">Preview</button>
      </div>
      <textarea aria-label="Messages" readOnly className="mx-[5px] mt-1 mb-[5px] h-10 shrink-0 resize-none border border-[#a3a9b3] bg-[#ecefec]" />
    </aside>
  );
}

/* ---------- status ---------- */

function Bar() {
  return <span className="h-[10px] w-px shrink-0 bg-[#a6aebd]" />;
}

function StatusBar() {
  const tools = ['sRed', 'sGrey', 'sForm', 'sHelp', 'sCubes', 'sBox', 'sFilm', 'sCycle', 'sGrid'];
  return (
    <footer className="relative shrink-0 text-[#1f232b]">
      <div className="flex h-[13px] items-center justify-between border-b border-[#a5adbd] pl-[5px]">
        <strong className="text-[8px]">Swept body: select path</strong>
        <div className="flex w-[372px] items-center">
          <span className="flex h-[11px] w-[82px] items-center bg-white">
            <input aria-label="Search" className="w-[70px] bg-transparent outline-none" />
            {icons.search}
          </span>
          <span className="w-[72px] pl-2 whitespace-nowrap">Absolute XY Top</span>
          <Bar />
          <span className="w-[45px] pl-[7px] whitespace-nowrap">View ABS</span>
          <span className="h-[9px] w-[7px] border-l-2 border-dotted border-[#aab1bf]" />
          <strong className="w-[36px] whitespace-nowrap">LAYER0</strong>
          <Bar />
          <span className="w-[19px]" />
          <Bar />
          <span className="ml-1 flex gap-[7px]">
            <span className="h-[7px] w-[22px] border-y-2 border-[#b45468] bg-[#40608c]" />
            <span className="h-[7px] w-[22px] bg-[#46628e]" />
            <span className="h-[7px] w-[22px] bg-[#46628e]" />
          </span>
          <span className="ml-2">{icons.globe}</span>
        </div>
      </div>
      <div className="flex h-3 items-center justify-between pl-[5px]">
        <span>Select an element</span>
        <div className="flex w-[507px] items-center">
          <span className="w-[36px]">Toggle</span>
          {tools.map((t) => (
            <span key={t} className="flex items-center">
              <Bar />
              <IconButton name={t} active={t === 'sBox'} className="mx-[3px] size-[13px]" />
            </span>
          ))}
          <Bar />
          <span className="w-[71px] pl-[6px] whitespace-nowrap">LS: 1.00 PS: 1.00</span>
          <Bar />
          <span className="w-[52px] pl-[8px] whitespace-nowrap">Units: MM</span>
          <Bar />
          <span className="pl-1 whitespace-nowrap"><span className="text-[#e02c3c]">X = -0018.211</span> Y = 0110.000 Z = 0000.000</span>
        </div>
      </div>
      <p className="pointer-events-none absolute inset-x-0 -top-[5px] text-center font-['DejaVu_Serif',serif] text-[16px] leading-[22px] whitespace-nowrap text-[#8390a8]">
        VISI CAD/CAM/CAE for Mold and Die by VISI Club
      </p>
    </footer>
  );
}

export default function App() {
  return (
    <div className="flex h-screen flex-col overflow-hidden bg-[#d3d9e5] font-['Open_Sans',sans-serif] text-[8px] leading-3">
      <TitleBar />
      <MenuBar />
      <Ribbon />
      <div className="flex min-h-0 flex-1">
        <LeftDock />
        <Viewport />
        <div className="w-[5px] shrink-0 border-x border-dotted border-[#bcc3d0] bg-[#d8dde7]" />
        <SweptPanel />
        <div className="flex w-4 shrink-0 flex-col items-center gap-[6px] pt-px">
          <button type="button" aria-label="Swept body tab" className="grid size-[15px] place-items-center border border-[#e8c64a] bg-[#fbe37c]">
            <svg viewBox="0 0 14 14" className="size-[13px]" fill="none"><circle cx="7" cy="7" r="6" fill="#4f9a3a" stroke="#5c6a58" /><path d="M4 4L7 10L10 4M7 3V6" stroke="#e6f0e0" strokeWidth="1.500" /></svg>
          </button>
          <span className="rotate-180 text-[8px] text-[#3b424f] [writing-mode:vertical-rl]">Swept body</span>
        </div>
      </div>
      <StatusBar />
    </div>
  );
}
